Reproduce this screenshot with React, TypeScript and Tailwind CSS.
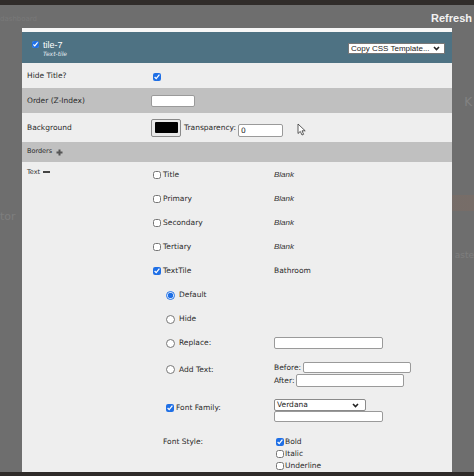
import React from "react";

const font = "font-['DejaVu_Sans',sans-serif]";

function Box({ checked = false }: { checked?: boolean }) {
  return (
    <input
      type="checkbox"
      readOnly
      checked={checked}
      className="m-0 h-[8px] w-[8px] shrink-0 accent-[#1f6fe5]"
    />
  );
}

function Radio({ checked = false }: { checked?: boolean }) {
  return (
    <input
      type="radio"
      readOnly
      checked={checked}
      className="m-0 h-[9px] w-[9px] shrink-0 accent-[#1f6fe5]"
    />
  );
}

function Field({ w, h = "h-[12px]", value = "" }: { w: string; h?: string; value?: string }) {
  return (
    <input
      type="text"
      readOnly
      value={value}
      className={`${w} ${h} rounded-[2px] border border-[#9a9a9a] bg-white px-[2px] text-[7.5px] text-[#222] outline-none`}
    />
  );
}

function Chevron() {
  return (
    <svg width="7" height="5" viewBox="0 0 7 5">
      <path d="M1 1 L3.5 3.5 L6 1" fill="none" stroke="#222" strokeWidth="1.6" />
    </svg>
  );
}

function Row({ label, children, className }: { label: string; children?: React.ReactNode; className: string }) {
  return (
    <div className={`flex items-center ${className}`}>
      <div className="w-[129px] shrink-0 pl-[5px] text-[7.5px] text-[#2a2a2a]">{label}</div>
      {children}
    </div>
  );
}

function TextOption({ label, value }: { label: string; value?: React.ReactNode }) {
  return (
    <div className="flex h-[24px] items-center">
      <div className="flex w-[123px] shrink-0 items-center gap-[2px] pl-[2px]">
        <Box checked={label === "TextTile"} />
        <span className="text-[7.5px] text-[#2a2a2a]">{label}</span>
      </div>
      {value}
    </div>
  );
}

function Blank() {
  return <span className="font-['Liberation_Sans',sans-serif] text-[8px] italic text-[#333]">Blank</span>;
}

export default function App() {
  return (
    <div className={`flex h-[476px] w-full flex-col bg-[#6e6e6e] ${font}`}>
      <div className="h-[5px] bg-[#302c2a]" />

      <div className="relative flex-1">
        {/* dimmed page behind the dialog */}
        <div className="flex h-full flex-col">
          <div className="flex items-center justify-between pt-[5px]">
            <span className="pt-[2px] text-[7px] text-[#797979]">dashboard</span>
            <span className="mr-[2px] font-['Liberation_Sans',sans-serif] text-[11px] font-semibold text-[#f2f2f2]">
              Refresh
            </span>
          </div>
          <div className="mt-[66px] flex justify-end pr-[2px] text-[12px] text-[#828282]">K</div>
          <div className="mt-[84px] h-[16px] bg-gradient-to-r from-[#6e6e6e] via-[#6e6e6e] to-[#776d68]" />
          <div className="text-[11px] leading-[12px] text-[#7e7e7e]">tor</div>
          <div className="mt-[26px] flex justify-end text-[9px] text-[#7e7e7e]">
            <span>aste</span>
          </div>
        </div>

        {/* dialog */}
        <div className="absolute bottom-0 left-[22px] top-[23px] w-[430px] overflow-hidden border-t-4 border-[#f7f7f7] bg-[#eeeeee]">
          <div className="flex h-[31px] items-start justify-between bg-[#4e7283] pl-[10px] pr-[7px] pt-[8px]">
            <div className="flex items-start gap-[4px]">
              <input type="checkbox" readOnly checked className="m-0 mt-[1px] h-[7px] w-[7px] accent-[#1f6fe5]" />
              <div className="flex flex-col">
                <span className="font-['Liberation_Sans',sans-serif] text-[9px] leading-[10px] text-white">tile-7</span>
                <span className="text-[6px] italic leading-[7px] text-[#e8eef2]">Text-tile</span>
              </div>
            </div>
            <div className="mt-[3px] flex h-[11px] w-[97px] items-center justify-between border border-[#777] bg-white pl-[2px] pr-[4px]">
              <span className="font-['Liberation_Sans',sans-serif] text-[8px] text-[#222]">Copy CSS Template...</span>
              <Chevron />
            </div>
          </div>

          <Row label="Hide Title?" className="h-[25px]">
            <div className="pl-[2px] pt-[1px]">
              <Box checked />
            </div>
          </Row>

          <Row label="Order (Z-Index)" className="h-[25px] bg-[#c0c0c0]">
            <Field w="w-[44px]" />
          </Row>

          <Row label="Background" className="h-[29px]">
            <div className="flex h-[18px] w-[30px] items-center justify-center rounded-[2px] border border-[#8a8a8a] bg-[#e9e9e9]">
              <div className="h-[11px] w-[23px] rounded-[1px] bg-black" />
            </div>
            <span className="ml-[3px] text-[7.5px] text-[#2a2a2a]">Transparency:</span>
            <div className="ml-[2px]">
              <Field w="w-[45px]" h="h-[13px]" value="0" />
            </div>
            <svg className="ml-[14px] mt-[3px]" width="10" height="13" viewBox="0 0 10 13">
              <path d="M1 1 L1 10.5 L3.3 8.4 L5 12 L6.6 11.3 L5 7.8 L8.2 7.8 Z" fill="#fff" stroke="#333" strokeWidth="0.8" strokeLinejoin="round" />
            </svg>
          </Row>

          <div className="flex h-[20px] items-center gap-[4px] bg-[#c0c0c0] pl-[5px]">
            <span className="text-[6.5px] text-[#2a2a2a]">Borders</span>
            <svg width="7" height="7" viewBox="0 0 7 7">
              <path d="M3.5 0.5 V6.5 M0.5 3.5 H6.5" stroke="#555" strokeWidth="2" />
            </svg>
          </div>

          <div className="flex">
            <div className="flex w-[129px] shrink-0 items-center gap-[3px] self-start pl-[5px] pt-[6px]">
              <span className="text-[6.5px] leading-[8px] text-[#2a2a2a]">Text</span>
              <div className="h-[1.5px] w-[7px] bg-[#444]" />
            </div>

            <div className="flex flex-col pt-px text-[7.5px] text-[#2a2a2a]">
              <TextOption label="Title" value={<Blank />} />
              <TextOption label="Primary" value={<Blank />} />
              <TextOption label="Secondary" value={<Blank />} />
              <TextOption label="Tertiary" value={<Blank />} />
              <TextOption label="TextTile" value={<span>Bathroom</span>} />

              <div className="flex h-[24px] items-center pl-[15px]">
                <Radio checked />
                <span className="ml-[4px]">Default</span>
              </div>
              <div className="flex h-[24px] items-center pl-[15px]">
                <Radio />
                <span className="ml-[4px]">Hide</span>
              </div>
              <div className="flex h-[24px] items-center">
                <div className="flex w-[123px] shrink-0 items-center pl-[15px]">
                  <Radio />
                  <span className="ml-[4px]">Replace:</span>
                </div>
                <Field w="w-[109px]" />
              </div>

              <div className="flex h-[38px] items-start pt-[7px]">
                <div className="flex w-[123px] shrink-0 items-center pl-[15px] pt-[2px]">
                  <Radio />
                  <span className="ml-[4px]">Add Text:</span>
                </div>
                <div className="flex flex-col">
                  <div className="flex items-center gap-[2px]">
                    <span>Before:</span>
                    <Field w="w-[108px]" h="h-[11px]" />
                  </div>
                  <div className="flex items-center gap-[2px] pt-px">
                    <span>After:</span>
                    <Field w="w-[108px]" h="h-[13px]" />
                  </div>
                </div>
              </div>

              <div className="flex h-[35px] items-start pt-[6px]">
                <div className="flex w-[123px] shrink-0 items-center gap-[2px] pl-[15px] pt-[3px]">
                  <Box checked />
                  <span>Font Family:</span>
                </div>
                <div className="flex flex-col">
                  <div className="flex h-[12px] w-[92px] items-center justify-between rounded-[2px] border border-[#8a8a8a] bg-white pl-[2px] pr-[6px]">
                    <span className="text-[7.5px] text-[#222]">Verdana</span>
                    <Chevron />
                  </div>
                  <Field w="w-[109px]" h="h-[11px]" />
                </div>
              </div>

              <div className="flex items-start pt-[8px]">
                <div className="w-[123px] shrink-0 pl-[12px] leading-[12px]">Font Style:</div>
                <div className="flex flex-col pl-[2px]">
                  <div className="flex h-[12px] items-center gap-[1px]">
                    <Box checked />
                    <span>Bold</span>
                  </div>
                  <div className="flex h-[12px] items-center gap-[1px]">
                    <Box />
                    <span>Italic</span>
                  </div>
                  <div className="flex h-[12px] items-center gap-[1px]">
                    <Box />
                    <span>Underline</span>
                  </div>
                </div>
              </div>
            </div>
          </div>
        </div>
      </div>

      <div className="h-[4px] bg-[#2f2b29]" />
    </div>
  );
}
